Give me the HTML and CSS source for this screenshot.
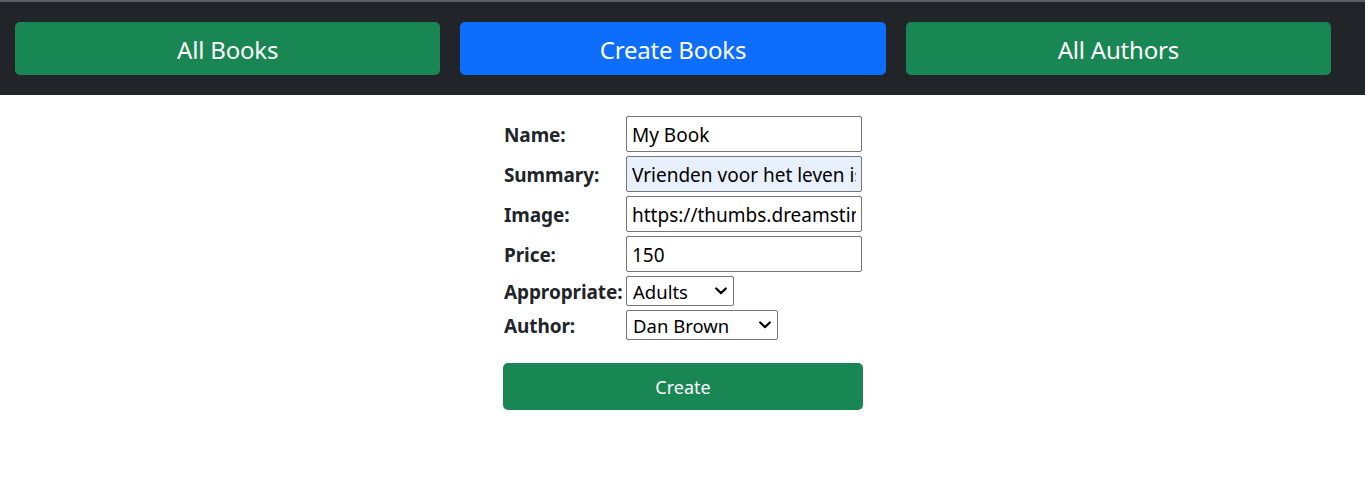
FILE: index.html
```html
<!DOCTYPE html>
<html lang="en">
<head>
<meta charset="utf-8">
<title>Create Book</title>
<link rel="stylesheet" href="styles.css">
</head>
<body>
<nav class="topbar">
  <a class="nav-btn green" href="#">All Books</a>
  <a class="nav-btn blue" href="#">Create Books</a>
  <a class="nav-btn green" href="#">All Authors</a>
</nav>
<main class="content">
  <form class="book-form">
    <div class="fields">
      <label class="lbl" for="name">Name:</label>
      <input class="txt" id="name" type="text" value="My Book">
      <label class="lbl" for="summary">Summary:</label>
      <input class="txt autofill" id="summary" type="text" value="Vrienden voor het leven is een boek over vriendschap">
      <label class="lbl" for="image">Image:</label>
      <input class="txt" id="image" type="text" value="https://thumbs.dreamstime.com/b/book-cover.jpg">
      <label class="lbl" for="price">Price:</label>
      <input class="txt" id="price" type="text" value="150">
      <label class="lbl" for="appropriate">Appropriate:</label>
      <select class="sel sel-short" id="appropriate">
        <option>Adults</option>
        <option>Kids</option>
      </select>
      <label class="lbl" for="author">Author:</label>
      <select class="sel sel-long" id="author">
        <option>Dan Brown</option>
      </select>
    </div>
    <button class="create-btn" type="button">Create</button>
  </form>
</main>
</body>
</html>
```

FILE: styles.css
```css
* { box-sizing: border-box; }

html, body {
  margin: 0;
  padding: 0;
  background: #ffffff;
}

body {
  font-family: "Noto Sans", "Open Sans", "Liberation Sans", sans-serif;
  color: #212529;
}

.topbar {
  display: flex;
  gap: 20px;
  background: #212529;
  border-top: 2px solid #5b5d61;
  padding: 20px 34px 20px 15px;
}

.nav-btn {
  flex: 1 1 0;
  height: 53px;
  display: flex;
  align-items: center;
  justify-content: center;
  color: #ffffff;
  text-decoration: none;
  font-size: 24px;
  border-radius: 5px;
  letter-spacing: -0.2px;
  padding-top: 2px;
}

.green { background: #198754; }
.blue { background: #0d6efd; }

.content {
  display: flex;
  justify-content: center;
  padding-top: 21px;
}

.book-form {
  width: 360px;
  margin-left: 1px;
}

.fields {
  display: grid;
  grid-template-columns: 123px 1fr;
  row-gap: 4px;
  align-items: center;
}

.lbl {
  font-weight: 700;
  font-size: 19px;
  padding-left: 1px;
  padding-top: 2px;
  white-space: nowrap;
  letter-spacing: -0.1px;
}

.txt {
  width: 236px;
  height: 36px;
  border: 1px solid #767676;
  border-radius: 2px;
  padding: 1px 5px 0;
  font-family: inherit;
  font-size: 19px;
  color: #000000;
  background: #ffffff;
  outline: none;
}

.autofill { background: #e8f0fe; }

.sel {
  height: 30px;
  border: 1px solid #767676;
  border-radius: 2px;
  padding: 0 24px 0 6px;
  font-family: inherit;
  font-size: 18.5px;
  color: #000000;
  background-color: #ffffff;
  -webkit-appearance: none;
  appearance: none;
  background-image: url("data:image/svg+xml,%3Csvg xmlns='http://www.w3.org/2000/svg' width='12' height='8' viewBox='0 0 12 8'%3E%3Cpath d='M1.2 1.5l4.8 4.6 4.8-4.6' fill='none' stroke='%23000' stroke-width='2.2' stroke-linecap='round' stroke-linejoin='round'/%3E%3C/svg%3E");
  background-repeat: no-repeat;
  background-position: right 6px center;
}

.sel-short { width: 108px; }
.sel-long { width: 152px; }

.create-btn {
  display: block;
  width: 360px;
  height: 47px;
  margin-top: 23px;
  border: none;
  border-radius: 5px;
  background: #198754;
  color: #ffffff;
  font-family: inherit;
  font-size: 18px;
}
```
